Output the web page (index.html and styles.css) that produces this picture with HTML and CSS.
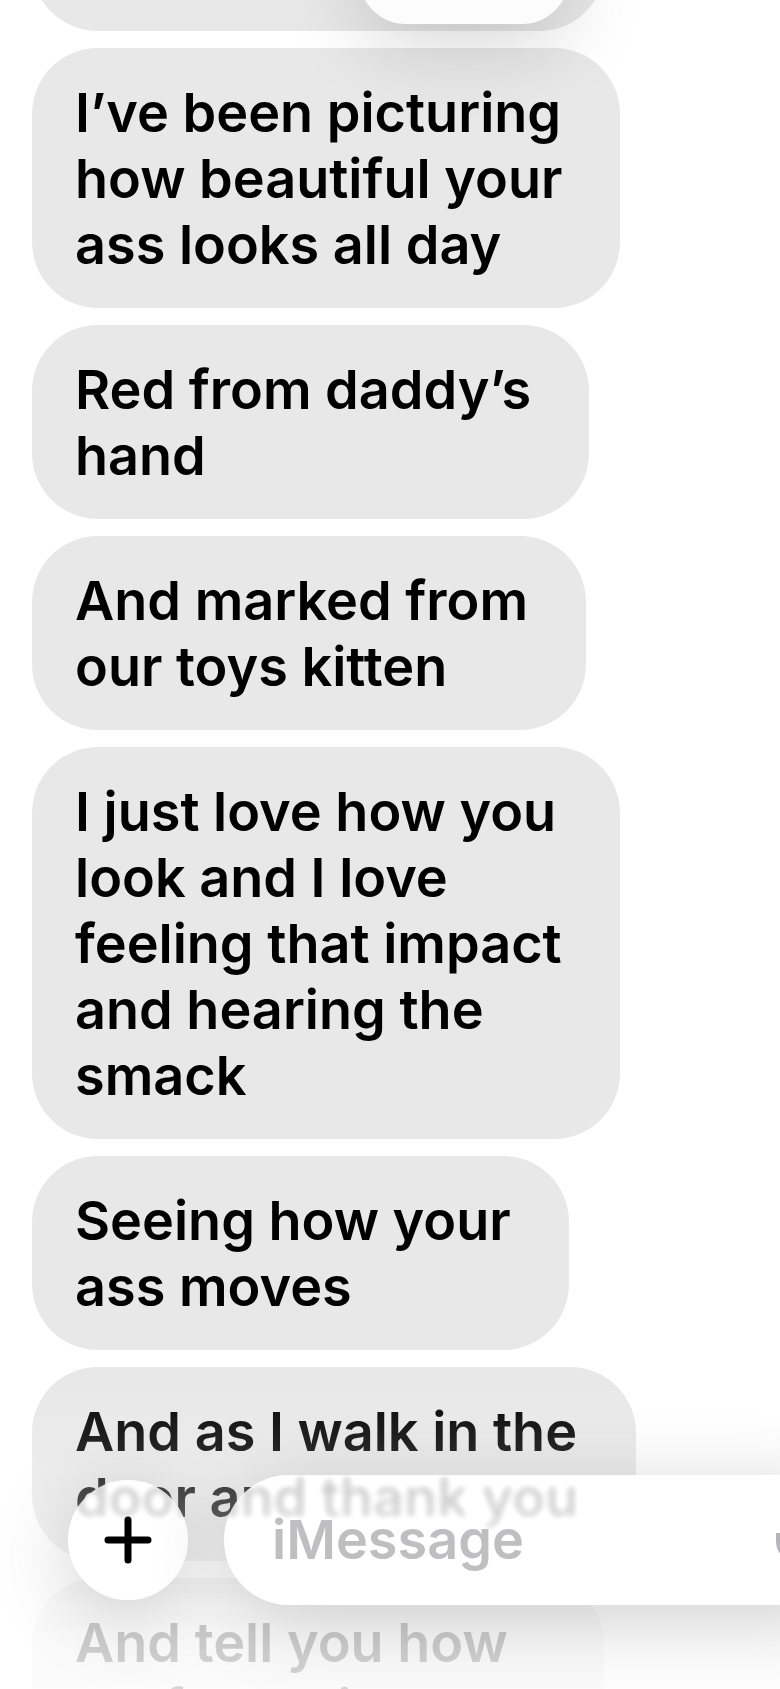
FILE: index.html
```
<!DOCTYPE html>
<html lang="en">
<head>
    <meta charset="UTF-8">
    <meta name="viewport" content="width=device-width, initial-scale=1.0">
    <title>Messages</title>
    <link rel="stylesheet" href="styles.css">
</head>
<body>
    <main class="conversation">
        <div class="message message-cut"></div>
        <p class="message">I’ve been picturing<br>how beautiful your<br>ass looks all day</p>
        <p class="message">Red from daddy’s<br>hand</p>
        <p class="message">And marked from<br>our toys kitten</p>
        <p class="message">I just love how you<br>look and I love<br>feeling that impact<br>and hearing the<br>smack</p>
        <p class="message">Seeing how your<br>ass moves</p>
        <p class="message">And as I walk in the<br>door and thank you</p>
        <p class="message">And tell you how<br>perfect a little one</p>
    </main>

    <div class="header-pill"></div>

    <div class="bottom-fade"></div>
    <form class="composer">
        <button class="add-button" type="button" aria-label="Add">
            <svg width="48" height="48" viewBox="0 0 48 48" fill="none" stroke="#000" stroke-width="7" stroke-linecap="round">
                <path d="M24 4v40M4 24h40"/>
            </svg>
        </button>
        <div class="field">
            <input class="field-input" type="text" placeholder="iMessage" aria-label="iMessage">
            <button class="mic-button" type="button" aria-label="Dictate">
                <svg width="40" height="54" viewBox="0 0 40 54" fill="none" stroke="#b4b4ba" stroke-width="6">
                    <path d="M3 20v8c0 10 7 17 17 17s17-7 17-17v-8M20 45v7"/>
                    <rect x="12" y="3" width="16" height="32" rx="8" fill="#b4b4ba" stroke="none"/>
                </svg>
            </button>
        </div>
    </form>
</body>
</html>
```
FILE: styles.css
```
* {
    margin: 0;
    padding: 0;
    box-sizing: border-box;
}

body {
    height: 100vh;
    overflow: hidden;
    background: #fff;
    font-family: Inter, 'Liberation Sans', sans-serif;
    font-size: 54px;
    line-height: 66px;
    font-weight: 600;
    color: #000;
}

/* Messages */
.conversation {
    display: flex;
    flex-direction: column;
    align-items: flex-start;
    gap: 17px;
    padding: 0 32px;
}

.message {
    flex-shrink: 0;
    padding: 32px 58px 30px 43px;
    border-radius: 66px;
    background: #e8e8e9;
    white-space: nowrap;
}

/* Older message, scrolled under the top edge */
.message-cut {
    width: 80%;
    height: 131px;
    margin-top: -100px;
}

/* Contact name hanging over the top edge */
.header-pill {
    position: fixed;
    top: -70px;
    left: 46%;
    width: 27%;
    height: 94px;
    border-radius: 47px;
    background: #fcfcfc;
    box-shadow: 0 16px 80px rgba(0, 0, 0, 0.18);
}

.bottom-fade {
    position: fixed;
    left: 0;
    right: 0;
    bottom: 0;
    height: 320px;
    background: linear-gradient(rgba(255, 255, 255, 0), rgba(255, 255, 255, 0.15) 25%, rgba(255, 255, 255, 0.36) 46%, rgba(255, 255, 255, 0.78) 75%, rgba(255, 255, 255, 0.84));
}

/* Composer */
.composer {
    position: fixed;
    left: 68px;
    right: -80px;
    bottom: 84px;
    display: flex;
    align-items: center;
    gap: 36px;
}

.add-button,
.field {
    background: rgba(255, 255, 255, 0.7);
    backdrop-filter: blur(3px) brightness(1.15);
    box-shadow: 0 16px 80px rgba(0, 0, 0, 0.19);
}

.add-button {
    flex-shrink: 0;
    display: flex;
    align-items: center;
    justify-content: center;
    width: 120px;
    height: 120px;
    border: none;
    border-radius: 50%;
}

.field {
    flex: 1;
    min-width: 0;
    display: flex;
    align-items: center;
    height: 130px;
    padding: 0 44px 0 48px;
    border-radius: 65px;
}

.field-input {
    flex: 1;
    min-width: 0;
    border: none;
    outline: none;
    background: none;
    font: inherit;
}

.field-input::placeholder {
    color: #bfbfc1;
    opacity: 1;
}

.mic-button {
    flex-shrink: 0;
    border: none;
    background: none;
    line-height: 0;
}
```
